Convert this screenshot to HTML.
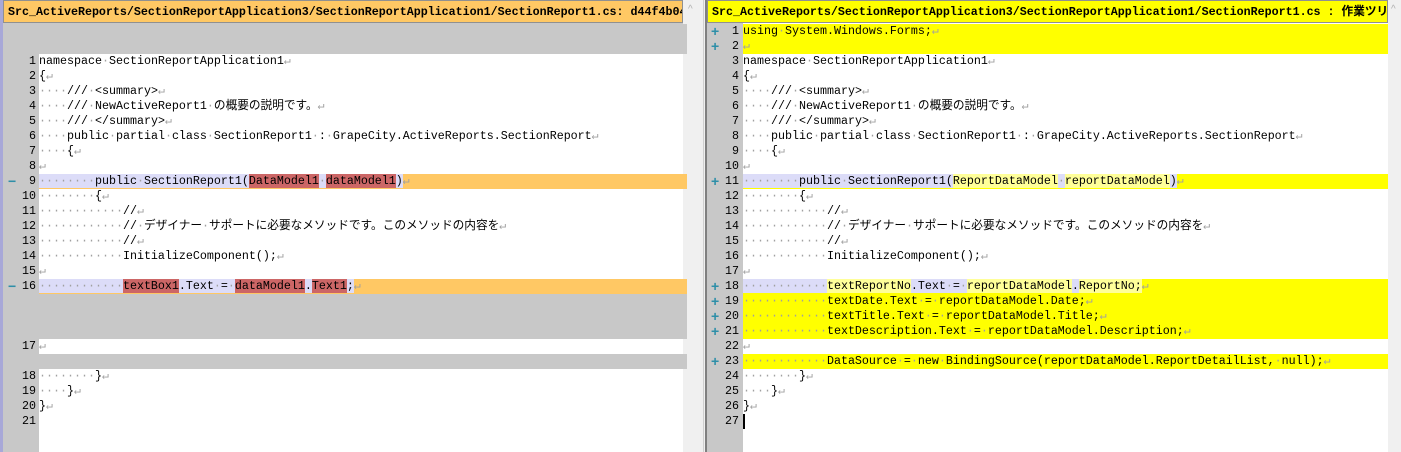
<!DOCTYPE html>
<html><head><meta charset="utf-8">
<style>
*{margin:0;padding:0;box-sizing:border-box}
body{width:1401px;height:452px;overflow:hidden;background:#fff;position:relative;font-family:"Liberation Mono","Noto Sans CJK JP",monospace;font-size:11.67px;color:#000}
.abs{position:absolute}
.row{position:absolute;height:15px;line-height:15px;white-space:pre}
.num{position:absolute;top:0;text-align:right;color:#000}
.code{position:absolute;top:0;height:15px;white-space:pre}
.d{color:#a0a0a0}
.r{color:#a0a0a0}
.lv{background:#dcdcf8}
.rd{background:#cc6666}
.py{background:#ffff99}
.mk{position:absolute;top:0;color:#2e8fa8;font-weight:bold;font-size:14px;font-family:"Liberation Sans",sans-serif}
.hdr{position:absolute;top:0;height:23px;line-height:22px;font-weight:bold;white-space:pre;overflow:hidden;padding-left:4px;border:1px solid #909090;font-size:11.67px}
</style></head><body>
<!-- left border -->
<div class="abs" style="left:0;top:0;width:3px;height:452px;background:#a8a8d8"></div>
<!-- left gray top area -->
<div class="abs" style="left:3px;top:22px;width:680px;height:32px;background:#c8c8c8"></div>
<!-- left gutter -->
<div class="abs" style="left:3px;top:22px;width:36px;height:430px;background:#c8c8c8"></div>
<!-- left header -->
<div class="hdr" style="left:3px;width:680px;background:#ffc864">Src_ActiveReports/SectionReportApplication3/SectionReportApplication1/SectionReport1.cs: d44f4b04</div>
<!-- middle scrollbar -->
<div class="abs" style="left:683px;top:0;width:22px;height:452px;background:#f0f0f0"></div>
<div class="abs" style="left:688px;top:4px;color:#b0b0b0;font-size:10px;font-family:'Liberation Sans',sans-serif">^</div>
<div class="abs" style="left:683px;top:174px;width:4px;height:15px;background:#ffc864"></div>
<div class="abs" style="left:683px;top:24px;width:4px;height:30px;background:#c8c8c8"></div>
<div class="abs" style="left:683px;top:279px;width:4px;height:15px;background:#ffc864"></div>
<div class="abs" style="left:683px;top:294px;width:4px;height:45px;background:#c8c8c8"></div>
<div class="abs" style="left:683px;top:354px;width:4px;height:15px;background:#c8c8c8"></div>
<div class="abs" style="left:703px;top:0;width:1px;height:452px;background:#d0d0d0"></div>
<div class="abs" style="left:705px;top:0;width:2px;height:452px;background:#808080"></div>
<!-- right gutter -->
<div class="abs" style="left:707px;top:22px;width:36px;height:430px;background:#c8c8c8"></div>
<div class="hdr" style="left:707px;width:681px;background:#ffff00">Src_ActiveReports/SectionReportApplication3/SectionReportApplication1/SectionReport1.cs : 作業ツリー</div>
<!-- right scrollbar -->
<div class="abs" style="left:1388px;top:0;width:13px;height:452px;background:#f0f0f0"></div>
<div class="abs" style="left:1391px;top:4px;color:#b0b0b0;font-size:10px;font-family:'Liberation Sans',sans-serif">^</div>

<!-- LEFT ROWS: gutter num right edge at 36 ; code at 39 -->
<div class="row" style="left:0;top:54px;width:683px"><span class="num" style="left:0;width:36px">1</span><span class="code" style="left:39px">namespace<span class="d">·</span>SectionReportApplication1<span class="r">↵</span></span></div>
<div class="row" style="left:0;top:69px;width:683px"><span class="num" style="left:0;width:36px">2</span><span class="code" style="left:39px">{<span class="r">↵</span></span></div>
<div class="row" style="left:0;top:84px;width:683px"><span class="num" style="left:0;width:36px">3</span><span class="code" style="left:39px"><span class="d">····</span>///<span class="d">·</span>&lt;summary&gt;<span class="r">↵</span></span></div>
<div class="row" style="left:0;top:99px;width:683px"><span class="num" style="left:0;width:36px">4</span><span class="code" style="left:39px"><span class="d">····</span>///<span class="d">·</span>NewActiveReport1<span class="d">·</span>の概要の説明です。<span class="r">↵</span></span></div>
<div class="row" style="left:0;top:114px;width:683px"><span class="num" style="left:0;width:36px">5</span><span class="code" style="left:39px"><span class="d">····</span>///<span class="d">·</span>&lt;/summary&gt;<span class="r">↵</span></span></div>
<div class="row" style="left:0;top:129px;width:683px"><span class="num" style="left:0;width:36px">6</span><span class="code" style="left:39px"><span class="d">····</span>public<span class="d">·</span>partial<span class="d">·</span>class<span class="d">·</span>SectionReport1<span class="d">·</span>:<span class="d">·</span>GrapeCity.ActiveReports.SectionReport<span class="r">↵</span></span></div>
<div class="row" style="left:0;top:144px;width:683px"><span class="num" style="left:0;width:36px">7</span><span class="code" style="left:39px"><span class="d">····</span>{<span class="r">↵</span></span></div>
<div class="row" style="left:0;top:159px;width:683px"><span class="num" style="left:0;width:36px">8</span><span class="code" style="left:39px"><span class="r">↵</span></span></div>
<div class="row" style="left:0;top:174px;width:683px"><span class="mk" style="left:8px">−</span><span class="num" style="left:0;width:36px">9</span><div class="abs" style="left:39px;top:0;width:644px;height:15px;background:#ffc864"></div><span class="code" style="left:39px"><span class="lv"><span class="d">········</span>public<span class="d">·</span>SectionReport1(</span><span class="rd">DataModel1</span><span class="lv"><span class="d">·</span></span><span class="rd">dataModel1</span><span class="lv">)</span><span class="r">↵</span></span></div>
<div class="row" style="left:0;top:189px;width:683px"><span class="num" style="left:0;width:36px">10</span><span class="code" style="left:39px"><span class="d">········</span>{<span class="r">↵</span></span></div>
<div class="row" style="left:0;top:204px;width:683px"><span class="num" style="left:0;width:36px">11</span><span class="code" style="left:39px"><span class="d">············</span>//<span class="r">↵</span></span></div>
<div class="row" style="left:0;top:219px;width:683px"><span class="num" style="left:0;width:36px">12</span><span class="code" style="left:39px"><span class="d">············</span>//<span class="d">·</span>デザイナー<span class="d">·</span>サポートに必要なメソッドです。このメソッドの内容を<span class="r">↵</span></span></div>
<div class="row" style="left:0;top:234px;width:683px"><span class="num" style="left:0;width:36px">13</span><span class="code" style="left:39px"><span class="d">············</span>//<span class="r">↵</span></span></div>
<div class="row" style="left:0;top:249px;width:683px"><span class="num" style="left:0;width:36px">14</span><span class="code" style="left:39px"><span class="d">············</span>InitializeComponent();<span class="r">↵</span></span></div>
<div class="row" style="left:0;top:264px;width:683px"><span class="num" style="left:0;width:36px">15</span><span class="code" style="left:39px"><span class="r">↵</span></span></div>
<div class="row" style="left:0;top:279px;width:683px"><span class="mk" style="left:8px">−</span><span class="num" style="left:0;width:36px">16</span><div class="abs" style="left:39px;top:0;width:644px;height:15px;background:#ffc864"></div><span class="code" style="left:39px"><span class="lv"><span class="d">············</span></span><span class="rd">textBox1</span><span class="lv">.Text<span class="d">·</span>=<span class="d">·</span></span><span class="rd">dataModel1</span><span class="lv">.</span><span class="rd">Text1</span><span class="lv">;</span><span class="r">↵</span></span></div>
<div class="abs" style="left:39px;top:294px;width:644px;height:45px;background:#c8c8c8"></div>
<div class="row" style="left:0;top:339px;width:683px"><span class="num" style="left:0;width:36px">17</span><span class="code" style="left:39px"><span class="r">↵</span></span></div>
<div class="abs" style="left:39px;top:354px;width:644px;height:15px;background:#c8c8c8"></div>
<div class="row" style="left:0;top:369px;width:683px"><span class="num" style="left:0;width:36px">18</span><span class="code" style="left:39px"><span class="d">········</span>}<span class="r">↵</span></span></div>
<div class="row" style="left:0;top:384px;width:683px"><span class="num" style="left:0;width:36px">19</span><span class="code" style="left:39px"><span class="d">····</span>}<span class="r">↵</span></span></div>
<div class="row" style="left:0;top:399px;width:683px"><span class="num" style="left:0;width:36px">20</span><span class="code" style="left:39px">}<span class="r">↵</span></span></div>
<div class="row" style="left:0;top:414px;width:683px"><span class="num" style="left:0;width:36px">21</span></div>

<!-- RIGHT ROWS: base x=707, num right edge 739, code 743 -->
<div class="row" style="left:707px;top:24px;width:681px"><div class="abs" style="left:36px;top:0;width:645px;height:15px;background:#ffff00"></div><span class="mk" style="left:4px">+</span><span class="num" style="left:0;width:32px">1</span><span class="code" style="left:36px">using<span class="d">·</span>System.Windows.Forms;<span class="r">↵</span></span></div>
<div class="row" style="left:707px;top:39px;width:681px"><div class="abs" style="left:36px;top:0;width:645px;height:15px;background:#ffff00"></div><span class="mk" style="left:4px">+</span><span class="num" style="left:0;width:32px">2</span><span class="code" style="left:36px"><span class="r">↵</span></span></div>
<div class="row" style="left:707px;top:54px;width:681px"><span class="num" style="left:0;width:32px">3</span><span class="code" style="left:36px">namespace<span class="d">·</span>SectionReportApplication1<span class="r">↵</span></span></div>
<div class="row" style="left:707px;top:69px;width:681px"><span class="num" style="left:0;width:32px">4</span><span class="code" style="left:36px">{<span class="r">↵</span></span></div>
<div class="row" style="left:707px;top:84px;width:681px"><span class="num" style="left:0;width:32px">5</span><span class="code" style="left:36px"><span class="d">····</span>///<span class="d">·</span>&lt;summary&gt;<span class="r">↵</span></span></div>
<div class="row" style="left:707px;top:99px;width:681px"><span class="num" style="left:0;width:32px">6</span><span class="code" style="left:36px"><span class="d">····</span>///<span class="d">·</span>NewActiveReport1<span class="d">·</span>の概要の説明です。<span class="r">↵</span></span></div>
<div class="row" style="left:707px;top:114px;width:681px"><span class="num" style="left:0;width:32px">7</span><span class="code" style="left:36px"><span class="d">····</span>///<span class="d">·</span>&lt;/summary&gt;<span class="r">↵</span></span></div>
<div class="row" style="left:707px;top:129px;width:681px"><span class="num" style="left:0;width:32px">8</span><span class="code" style="left:36px"><span class="d">····</span>public<span class="d">·</span>partial<span class="d">·</span>class<span class="d">·</span>SectionReport1<span class="d">·</span>:<span class="d">·</span>GrapeCity.ActiveReports.SectionReport<span class="r">↵</span></span></div>
<div class="row" style="left:707px;top:144px;width:681px"><span class="num" style="left:0;width:32px">9</span><span class="code" style="left:36px"><span class="d">····</span>{<span class="r">↵</span></span></div>
<div class="row" style="left:707px;top:159px;width:681px"><span class="num" style="left:0;width:32px">10</span><span class="code" style="left:36px"><span class="r">↵</span></span></div>
<div class="row" style="left:707px;top:174px;width:681px"><div class="abs" style="left:36px;top:0;width:645px;height:15px;background:#ffff00"></div><span class="mk" style="left:4px">+</span><span class="num" style="left:0;width:32px">11</span><span class="code" style="left:36px"><span class="lv"><span class="d">········</span>public<span class="d">·</span>SectionReport1(</span><span class="py">ReportDataModel</span><span class="lv"><span class="d">·</span></span><span class="py">reportDataModel</span><span class="lv">)</span><span class="r">↵</span></span></div>
<div class="row" style="left:707px;top:189px;width:681px"><span class="num" style="left:0;width:32px">12</span><span class="code" style="left:36px"><span class="d">········</span>{<span class="r">↵</span></span></div>
<div class="row" style="left:707px;top:204px;width:681px"><span class="num" style="left:0;width:32px">13</span><span class="code" style="left:36px"><span class="d">············</span>//<span class="r">↵</span></span></div>
<div class="row" style="left:707px;top:219px;width:681px"><span class="num" style="left:0;width:32px">14</span><span class="code" style="left:36px"><span class="d">············</span>//<span class="d">·</span>デザイナー<span class="d">·</span>サポートに必要なメソッドです。このメソッドの内容を<span class="r">↵</span></span></div>
<div class="row" style="left:707px;top:234px;width:681px"><span class="num" style="left:0;width:32px">15</span><span class="code" style="left:36px"><span class="d">············</span>//<span class="r">↵</span></span></div>
<div class="row" style="left:707px;top:249px;width:681px"><span class="num" style="left:0;width:32px">16</span><span class="code" style="left:36px"><span class="d">············</span>InitializeComponent();<span class="r">↵</span></span></div>
<div class="row" style="left:707px;top:264px;width:681px"><span class="num" style="left:0;width:32px">17</span><span class="code" style="left:36px"><span class="r">↵</span></span></div>
<div class="row" style="left:707px;top:279px;width:681px"><div class="abs" style="left:36px;top:0;width:645px;height:15px;background:#ffff00"></div><span class="mk" style="left:4px">+</span><span class="num" style="left:0;width:32px">18</span><span class="code" style="left:36px"><span class="lv"><span class="d">············</span></span><span class="py">textReportNo</span><span class="lv">.Text<span class="d">·</span>=<span class="d">·</span></span><span class="py">reportDataModel</span><span class="lv">.</span><span class="py">ReportNo;</span><span class="r">↵</span></span></div>
<div class="row" style="left:707px;top:294px;width:681px"><div class="abs" style="left:36px;top:0;width:645px;height:15px;background:#ffff00"></div><span class="mk" style="left:4px">+</span><span class="num" style="left:0;width:32px">19</span><span class="code" style="left:36px"><span class="d">············</span>textDate.Text<span class="d">·</span>=<span class="d">·</span>reportDataModel.Date;<span class="r">↵</span></span></div>
<div class="row" style="left:707px;top:309px;width:681px"><div class="abs" style="left:36px;top:0;width:645px;height:15px;background:#ffff00"></div><span class="mk" style="left:4px">+</span><span class="num" style="left:0;width:32px">20</span><span class="code" style="left:36px"><span class="d">············</span>textTitle.Text<span class="d">·</span>=<span class="d">·</span>reportDataModel.Title;<span class="r">↵</span></span></div>
<div class="row" style="left:707px;top:324px;width:681px"><div class="abs" style="left:36px;top:0;width:645px;height:15px;background:#ffff00"></div><span class="mk" style="left:4px">+</span><span class="num" style="left:0;width:32px">21</span><span class="code" style="left:36px"><span class="d">············</span>textDescription.Text<span class="d">·</span>=<span class="d">·</span>reportDataModel.Description;<span class="r">↵</span></span></div>
<div class="row" style="left:707px;top:339px;width:681px"><span class="num" style="left:0;width:32px">22</span><span class="code" style="left:36px"><span class="r">↵</span></span></div>
<div class="row" style="left:707px;top:354px;width:681px"><div class="abs" style="left:36px;top:0;width:645px;height:15px;background:#ffff00"></div><span class="mk" style="left:4px">+</span><span class="num" style="left:0;width:32px">23</span><span class="code" style="left:36px"><span class="d">············</span>DataSource<span class="d">·</span>=<span class="d">·</span>new<span class="d">·</span>BindingSource(reportDataModel.ReportDetailList,<span class="d">·</span>null);<span class="r">↵</span></span></div>
<div class="row" style="left:707px;top:369px;width:681px"><span class="num" style="left:0;width:32px">24</span><span class="code" style="left:36px"><span class="d">········</span>}<span class="r">↵</span></span></div>
<div class="row" style="left:707px;top:384px;width:681px"><span class="num" style="left:0;width:32px">25</span><span class="code" style="left:36px"><span class="d">····</span>}<span class="r">↵</span></span></div>
<div class="row" style="left:707px;top:399px;width:681px"><span class="num" style="left:0;width:32px">26</span><span class="code" style="left:36px">}<span class="r">↵</span></span></div>
<div class="row" style="left:707px;top:414px;width:681px"><span class="num" style="left:0;width:32px">27</span><div class="abs" style="left:36px;top:0;width:2px;height:15px;background:#000"></div></div>
</body></html>
